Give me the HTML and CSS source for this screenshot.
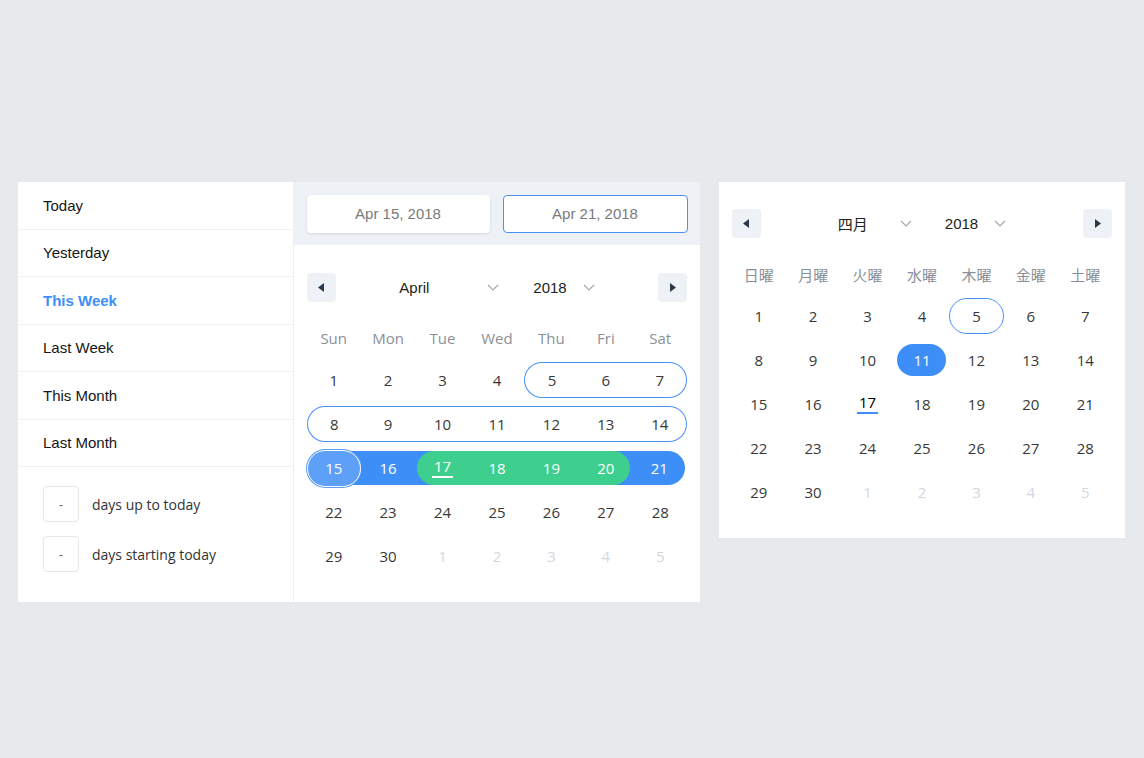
FILE: index.html
```html
<!DOCTYPE html>
<html lang="en">
<head>
<meta charset="utf-8">
<title>Date range picker</title>
<link rel="stylesheet" href="styles.css">
</head>
<body>
<div class="page">
  <div class="card range">
    <aside class="presets">
      <ul class="preset-list">
        <li class="preset">Today</li>
        <li class="preset">Yesterday</li>
        <li class="preset active">This Week</li>
        <li class="preset">Last Week</li>
        <li class="preset">This Month</li>
        <li class="preset">Last Month</li>
      </ul>
      <div class="custom">
        <div class="custom-row"><span class="num-box">-</span><span class="custom-label">days up to today</span></div>
        <div class="custom-row"><span class="num-box">-</span><span class="custom-label">days starting today</span></div>
      </div>
    </aside>
    <section class="range-main">
      <div class="inputs">
        <div class="date-input">Apr 15, 2018</div>
        <div class="date-input active">Apr 21, 2018</div>
      </div>
      <div class="cal cal-en">
        <div class="cal-head">
          <span class="nav-btn"><svg width="6" height="9" viewBox="0 0 6 9"><polygon points="6,0 6,9 0,4.5" fill="#2b3a4b"/></svg></span>
          <div class="cal-title">
            <span class="select month-sel"><span>April</span><svg class="chev" width="12" height="7" viewBox="0 0 12 7"><path d="M1 1 L6 6 L11 1" fill="none" stroke="#a3a9b1" stroke-width="1.2"/></svg></span>
            <span class="select"><span>2018</span><svg class="chev" width="12" height="7" viewBox="0 0 12 7"><path d="M1 1 L6 6 L11 1" fill="none" stroke="#a3a9b1" stroke-width="1.2"/></svg></span>
          </div>
          <span class="nav-btn"><svg width="6" height="9" viewBox="0 0 6 9"><polygon points="0,0 0,9 6,4.5" fill="#2b3a4b"/></svg></span>
        </div>
        <div class="weekdays">
          <span>Sun</span><span>Mon</span><span>Tue</span><span>Wed</span><span>Thu</span><span>Fri</span><span>Sat</span>
        </div>
        <div class="days">
          <div class="day">1</div><div class="day">2</div><div class="day">3</div><div class="day">4</div>
          <div class="day"><div class="band outline start">5</div></div>
          <div class="day"><div class="band outline">6</div></div>
          <div class="day"><div class="band outline end">7</div></div>

          <div class="day"><div class="band outline start">8</div></div>
          <div class="day"><div class="band outline">9</div></div>
          <div class="day"><div class="band outline">10</div></div>
          <div class="day"><div class="band outline">11</div></div>
          <div class="day"><div class="band outline">12</div></div>
          <div class="day"><div class="band outline">13</div></div>
          <div class="day"><div class="band outline end">14</div></div>

          <div class="day"><div class="band fill start"><div class="seg anchor">15</div></div></div>
          <div class="day"><div class="band fill">16</div></div>
          <div class="day"><div class="band fill"><div class="seg green start"><span class="today light">17</span></div></div></div>
          <div class="day"><div class="band fill"><div class="seg green">18</div></div></div>
          <div class="day"><div class="band fill"><div class="seg green">19</div></div></div>
          <div class="day"><div class="band fill"><div class="seg green end">20</div></div></div>
          <div class="day"><div class="band fill end">21</div></div>

          <div class="day">22</div><div class="day">23</div><div class="day">24</div><div class="day">25</div><div class="day">26</div><div class="day">27</div><div class="day">28</div>

          <div class="day">29</div><div class="day">30</div><div class="day muted">1</div><div class="day muted">2</div><div class="day muted">3</div><div class="day muted">4</div><div class="day muted">5</div>
        </div>
      </div>
    </section>
  </div>

  <div class="card cal cal-ja" lang="ja">
    <div class="cal-head">
      <span class="nav-btn"><svg width="6" height="9" viewBox="0 0 6 9"><polygon points="6,0 6,9 0,4.5" fill="#2b3a4b"/></svg></span>
      <div class="cal-title">
        <span class="select month-sel"><span class="cjk">四月</span><svg class="chev" width="12" height="7" viewBox="0 0 12 7"><path d="M1 1 L6 6 L11 1" fill="none" stroke="#a3a9b1" stroke-width="1.2"/></svg></span>
        <span class="select"><span>2018</span><svg class="chev" width="12" height="7" viewBox="0 0 12 7"><path d="M1 1 L6 6 L11 1" fill="none" stroke="#a3a9b1" stroke-width="1.2"/></svg></span>
      </div>
      <span class="nav-btn"><svg width="6" height="9" viewBox="0 0 6 9"><polygon points="0,0 0,9 6,4.5" fill="#2b3a4b"/></svg></span>
    </div>
    <div class="weekdays cjk">
      <span>日曜</span><span>月曜</span><span>火曜</span><span>水曜</span><span>木曜</span><span>金曜</span><span>土曜</span>
    </div>
    <div class="days">
      <div class="day">1</div><div class="day">2</div><div class="day">3</div><div class="day">4</div>
      <div class="day"><div class="band ring">5</div></div>
      <div class="day">6</div><div class="day">7</div>

      <div class="day">8</div><div class="day">9</div><div class="day">10</div>
      <div class="day"><div class="band solid">11</div></div>
      <div class="day">12</div><div class="day">13</div><div class="day">14</div>

      <div class="day">15</div><div class="day">16</div>
      <div class="day"><span class="today">17</span></div>
      <div class="day">18</div><div class="day">19</div><div class="day">20</div><div class="day">21</div>

      <div class="day">22</div><div class="day">23</div><div class="day">24</div><div class="day">25</div><div class="day">26</div><div class="day">27</div><div class="day">28</div>

      <div class="day">29</div><div class="day">30</div><div class="day muted">1</div><div class="day muted">2</div><div class="day muted">3</div><div class="day muted">4</div><div class="day muted">5</div>
    </div>
  </div>
</div>
</body>
</html>
```

FILE: styles.css
```css
html, body {
  margin: 0;
  padding: 0;
}

body {
  background: #e7eaed;
  font-family: "Liberation Sans", Arial, sans-serif;
  width: 1144px;
  height: 758px;
  overflow: hidden;
}

.page {
  display: flex;
  align-items: flex-start;
  gap: 19px;
  padding: 182px 0 0 18px;
}

.card {
  background: #ffffff;
}

/* ---------- range card ---------- */
.range {
  display: flex;
  width: 682px;
}

.presets {
  width: 276px;
  box-sizing: border-box;
  border-right: 1px solid #eef0f4;
}

.preset-list {
  list-style: none;
  margin: 0;
  padding: 0;
}

.preset {
  height: 47.5px;
  box-sizing: border-box;
  border-bottom: 1px solid #eff1f5;
  padding-left: 25px;
  display: flex;
  align-items: center;
  font-family: "Liberation Sans", Arial, sans-serif;
  font-size: 15px;
  color: #161616;
}

.preset.active {
  color: #3d8ef8;
  font-weight: 700;
}

.custom {
  padding: 19px 0 0 25px;
  display: flex;
  flex-direction: column;
  gap: 14px;
}

.custom-row {
  display: flex;
  align-items: center;
  gap: 13px;
}

.num-box {
  width: 36px;
  height: 36px;
  box-sizing: border-box;
  border: 1px solid #e3e7ec;
  border-radius: 4px;
  display: flex;
  align-items: center;
  justify-content: center;
  font-family: "Open Sans", sans-serif;
  font-size: 14px;
  color: #777;
}

.custom-label {
  font-family: "Open Sans", sans-serif;
  font-size: 14px;
  color: #333;
}

.range-main {
  width: 406px;
}

.inputs {
  background: #eef1f5;
  padding: 13px 12.5px 12px;
  display: flex;
  gap: 13px;
}

.date-input {
  flex: 1;
  height: 38px;
  box-sizing: border-box;
  background: #fff;
  border-radius: 4px;
  box-shadow: 0 1px 3px rgba(30, 40, 60, 0.12);
  display: flex;
  align-items: center;
  justify-content: center;
  padding-bottom: 1px;
  font-family: "Liberation Sans", Arial, sans-serif;
  font-size: 15px;
  color: #7a7a7a;
}

.date-input.active {
  border: 1px solid #4a90f5;
  box-shadow: none;
}

/* ---------- calendar ---------- */
.cal {
  padding: 28px 12.5px 24px;
}

.cal-ja {
  width: 406px;
  box-sizing: border-box;
  padding-top: 27px;
}

.cal-head {
  display: flex;
  align-items: center;
  justify-content: space-between;
  height: 29px;
}

.nav-btn {
  width: 29px;
  height: 29px;
  border-radius: 4px;
  background: #eef1f6;
  display: flex;
  align-items: center;
  justify-content: center;
}

.cal-title {
  display: flex;
  align-items: center;
  gap: 34px;
  font-family: "Liberation Sans", Arial, sans-serif;
  font-size: 15px;
  color: #222;
}

.select {
  display: flex;
  align-items: center;
  gap: 16px;
}

.cal-en .month-sel {
  gap: 58px;
}

.cal-ja .month-sel {
  gap: 32px;
}

.cal-ja .cal-title {
  gap: 33px;
}

.chev {
  display: block;
}

.cjk {
  font-family: "Noto Sans CJK JP", "Liberation Sans", sans-serif;
}

.weekdays {
  display: grid;
  grid-template-columns: repeat(7, 1fr);
  height: 40px;
  margin-top: 16px;
  align-items: center;
  text-align: center;
  font-family: "Open Sans", sans-serif;
  font-size: 15px;
  color: #8b9098;
}

.weekdays.cjk {
  font-family: "Noto Sans CJK JP", sans-serif;
  font-size: 15px;
}

.days {
  display: grid;
  grid-template-columns: repeat(7, 1fr);
  grid-auto-rows: 44px;
}

.day {
  display: flex;
  align-items: center;
  justify-content: center;
  font-family: "Open Sans", sans-serif;
  font-size: 15px;
  color: #383838;
}

.day.muted {
  color: #d3d8de;
}

.band {
  width: 100%;
  height: 36px;
  box-sizing: border-box;
  display: flex;
  align-items: center;
  justify-content: center;
}

.band.outline {
  border-top: 1.5px solid #4a90f5;
  border-bottom: 1.5px solid #4a90f5;
}

.band.outline.start {
  border-left: 1.5px solid #4a90f5;
  border-radius: 18px 0 0 18px;
}

.band.outline.end {
  border-right: 1.5px solid #4a90f5;
  border-radius: 0 18px 18px 0;
}

.band.fill {
  height: 34px;
  background: #3e8ef7;
  color: #fff;
}

.band.fill.start {
  border-radius: 17px 0 0 17px;
}

.band.fill.end {
  width: calc(100% - 2px);
  margin-right: 2px;
  border-radius: 0 17px 17px 0;
}

.seg {
  width: 100%;
  height: 100%;
  box-sizing: border-box;
  display: flex;
  align-items: center;
  justify-content: center;
}

.seg.green {
  background: #3ecf8e;
}

.seg.green.start {
  margin-left: 2px;
  padding-right: 2px;
  border-radius: 17px 0 0 17px;
}

.seg.green.end {
  margin-right: 3px;
  padding-left: 3px;
  border-radius: 0 17px 17px 0;
}

.seg.anchor {
  height: 37px;
  flex: none;
  background: #5ea0f8;
  border: 1.5px solid #ffffff;
  box-shadow: 0 0 0 1px #5d9ef6;
  border-radius: 18.5px;
}

.band.ring {
  border: 1.5px solid #4a90f5;
  border-radius: 18px;
}

.band.solid {
  width: 49px;
  height: 32px;
  background: #3e8ef7;
  color: #fff;
  border-radius: 16px;
}

.today {
  display: inline-block;
  line-height: 17px;
  padding: 0 2px 1px;
  border-bottom: 2.5px solid #3e8ef7;
  color: #000;
}

.today.light {
  border-bottom-color: #ffffff;
  color: #fff;
}
```
